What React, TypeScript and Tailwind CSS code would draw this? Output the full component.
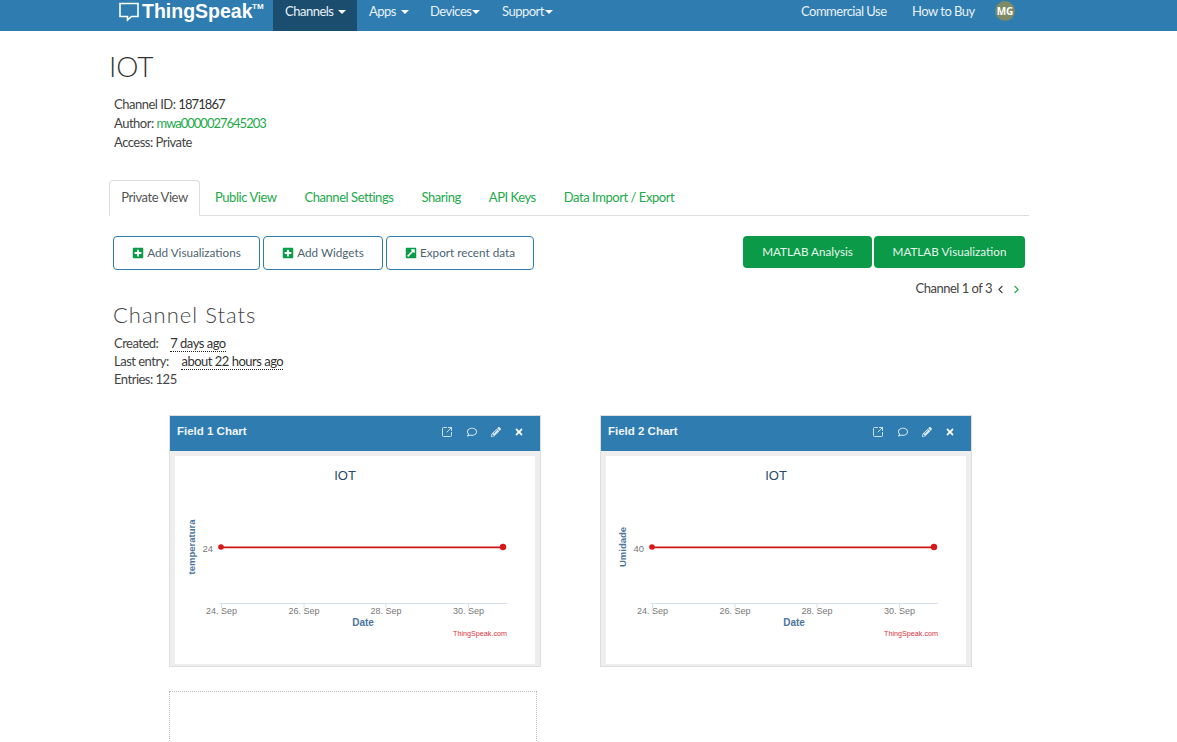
import { ChevronLeft, ChevronRight, SquareArrowOutUpRight } from 'lucide-react'
import { FaRegComment, FaPencilAlt, FaTimes, FaPlusSquare, FaExternalLinkSquareAlt } from 'react-icons/fa'

const body = "font-['Lato','Noto_Sans',sans-serif]"
const raleway = "font-['Lato','Open_Sans',sans-serif]"
const bodyText = 'text-[13px] tracking-[-0.5px]'

function Caret() {
  return <span className="inline-block w-0 h-0 border-x-[4px] border-t-[4px] border-x-transparent border-t-white" />
}

function NavItem({ label, gap, className }: { label: string; gap: string; className: string }) {
  return (
    <a className={`flex items-center h-[31px] pb-[8px] text-[#e8f1f6] ${bodyText} ${className}`}>
      {label}
      <span className={`flex ${gap}`}><Caret /></span>
    </a>
  )
}

function Navbar() {
  return (
    <nav className="h-[31px] bg-[#2e7cb0] flex items-start shrink-0">
      <div className="w-[119px]" />
      <svg width="20" height="21" viewBox="0 0 20 21" className="mt-[1px] shrink-0">
        <path d="M1 2.5h18v13h-6.5l-4 3.5v-3.5H1z" fill="none" stroke="#fff" strokeWidth="1.6" />
      </svg>
      <span className="ml-[3px] w-[110px] text-[19.5px] leading-[22px] font-bold text-white font-['Liberation_Sans',sans-serif]">ThingSpeak</span>
      <span className="w-[21px] text-[8px] leading-[12px] font-bold text-white font-['Liberation_Sans',sans-serif] mt-[1px]">TM</span>
      <NavItem label="Channels" gap="ml-[5px]" className="bg-[#1b4d6e] w-[84px] pl-[12px]" />
      <NavItem label="Apps" gap="ml-[5px]" className="ml-[12px] w-[61px]" />
      <NavItem label="Devices" gap="ml-[1px]" className="w-[72px]" />
      <NavItem label="Support" gap="ml-[1px]" className="w-[60px]" />
      <div className="w-[239px]" />
      <a className={`h-[31px] pt-[2px] text-[#e8f1f6] w-[111px] ${bodyText}`}>Commercial Use</a>
      <a className={`h-[31px] pt-[2px] text-[#e8f1f6] w-[83px] ${bodyText}`}>How to Buy</a>
      <span className="mt-[1px] w-[20px] h-[20px] rounded-full bg-[#7c8a66] text-white text-[10px] font-bold flex items-center justify-center font-['Noto_Sans',sans-serif]">MG</span>
    </nav>
  )
}

function ChannelHeader() {
  return (
    <div>
      <h1 className={`text-[28px] leading-[36px] font-light text-[#333] ${raleway}`}>IOT</h1>
      <div className={`mt-[11px] ml-[5px] leading-[19px] text-[#444] ${bodyText}`}>
        <div>Channel ID: <span className="text-[#333] tracking-[-0.9px]">1871867</span></div>
        <div>Author: <a className="text-[#22a94a] tracking-[-1px]">mwa0000027645203</a></div>
        <div>Access: Private</div>
      </div>
    </div>
  )
}

function Tabs() {
  const tabs = ['Public View', 'Channel Settings', 'Sharing', 'API Keys', 'Data Import / Export']
  return (
    <div className="mt-[28px] h-[36px] border-b border-[#ddd] flex items-start text-[13px] tracking-[-0.45px]">
      <a className="h-[36px] w-[91px] border border-[#ddd] border-b-white rounded-t-[4px] bg-white text-[#555] flex items-center justify-center">Private View</a>
      <div className="flex gap-[28px] ml-[15px] h-[35px] items-center text-[#22a94a]">
        {tabs.map(t => <a key={t}>{t}</a>)}
      </div>
    </div>
  )
}

function OutlineButton({ label, w, icon }: { label: string; w: string; icon: React.ReactNode }) {
  return (
    <button className={`${w} h-[34px] border border-[#2e7cb0] rounded-[4px] bg-white flex items-center justify-center gap-[3px] text-[11.7px] text-[#4d6472] ${raleway}`}>
      <span className="text-[#0a9d48] text-[12px]">{icon}</span>
      {label}
    </button>
  )
}

function ActionRow() {
  return (
    <div className="mt-[20px] flex items-start justify-between px-[4px]">
      <div className="flex gap-[3px]">
        <OutlineButton label="Add Visualizations" w="w-[147px]" icon={<FaPlusSquare />} />
        <OutlineButton label="Add Widgets" w="w-[120px]" icon={<FaPlusSquare />} />
        <OutlineButton label="Export recent data" w="w-[148px]" icon={<FaExternalLinkSquareAlt />} />
      </div>
      <div className="flex gap-[2px]">
        <button className={`w-[129px] h-[32px] bg-[#0a9a48] rounded-[4px] text-[11.7px] text-[#e5f5eb] ${raleway}`}>MATLAB Analysis</button>
        <button className={`w-[151px] h-[32px] bg-[#0a9a48] rounded-[4px] text-[11.7px] text-[#e5f5eb] ${raleway}`}>MATLAB Visualization</button>
      </div>
    </div>
  )
}

function ChannelStats() {
  return (
    <div className="ml-[4px]">
      <h3 className={`mt-[4px] text-[22px] leading-[26px] font-light text-[#444] tracking-[1px] ${raleway}`}>Channel Stats</h3>
      <div className={`mt-[6px] ml-[1px] leading-[18px] text-[#444] ${bodyText}`}>
        <div>Created: <span className="ml-[9px] text-[#333] border-b border-dotted border-[#222]">7 days ago</span></div>
        <div>Last entry: <span className="ml-[10px] text-[#333] border-b border-dotted border-[#222]">about 22 hours ago</span></div>
        <div>Entries: 125</div>
      </div>
    </div>
  )
}

function Plot({ yLabel, yValue }: { yLabel: string; yValue: string }) {
  const font = 'Liberation Sans, sans-serif'
  const ticks = [[46.5, '24. Sep'], [129, '26. Sep'], [211, '28. Sep'], [293.5, '30. Sep']] as const
  return (
    <svg width="360" height="208" viewBox="0 0 360 208" fontFamily={font}>
      <text x="170" y="24" textAnchor="middle" fontSize="13" fill="#274b6d">IOT</text>
      <text transform="translate(20 91) rotate(-90)" textAnchor="middle" fontSize="9.5" fontWeight="bold" fill="#4d759e">{yLabel}</text>
      <text x="38" y="96" textAnchor="end" fontSize="9.5" fill="#777">{yValue}</text>
      <line x1="44" y1="147.5" x2="332" y2="147.5" stroke="#d8e0ee" strokeWidth="1.2" />
      {ticks.map(([x, label]) => (
        <g key={label}>
          <line x1={x} y1="147" x2={x} y2="152" stroke="#d8e0ee" />
          <text x={x} y="158" textAnchor="middle" fontSize="9" fill="#777">{label}</text>
        </g>
      ))}
      <line x1="46" y1="90.6" x2="328" y2="90.6" stroke="#e58585" strokeWidth="1.2" />
      <line x1="46" y1="91.6" x2="328" y2="91.6" stroke="#c81818" strokeWidth="1.2" />
      <circle cx="46" cy="91" r="2.8" fill="#d81818" />
      <circle cx="328" cy="91" r="3.2" fill="#d81818" />
      <text x="188" y="170" textAnchor="middle" fontSize="10" fontWeight="bold" fill="#4d759e">Date</text>
      <text x="332" y="180" textAnchor="end" fontSize="7.2" fill="#d9343a">ThingSpeak.com</text>
    </svg>
  )
}

function ChartCard({ title, yLabel, yValue }: { title: string; yLabel: string; yValue: string }) {
  return (
    <div className="w-[372px] h-[252px] border border-[#ddd] bg-[#eee]">
      <div className="h-[35px] pb-[4px] bg-[#2e7cb0] flex items-center pl-[7px] text-white font-['Liberation_Sans',sans-serif]">
        <span className="text-[11.5px] font-bold text-[#eef5fa]">{title}</span>
        <div className="ml-auto mr-[16px] flex items-center text-[#dfeaf3]">
          <SquareArrowOutUpRight size={12} strokeWidth={1.8} />
          <FaRegComment size={10} className="ml-[14px]" />
          <FaPencilAlt size={10} className="ml-[14px]" />
          <FaTimes size={10} className="ml-[13px] text-white" />
        </div>
      </div>
      <div className="mx-[5px] mt-[5px] h-[208px] bg-white">
        <Plot yLabel={yLabel} yValue={yValue} />
      </div>
    </div>
  )
}

export default function App() {
  return (
    <div className={`w-[1177px] h-[742px] overflow-hidden bg-white flex flex-col ${body}`}>
      <Navbar />
      <main className="w-[920px] ml-[109px] pt-[17px]">
        <ChannelHeader />
        <Tabs />
        <ActionRow />
        <div className={`mt-[10px] mr-[6px] flex items-center justify-end h-[18px] text-[#444] ${bodyText}`}>
          Channel 1 of 3
          <ChevronLeft size={13} className="ml-[2px] text-[#444]" />
          <ChevronRight size={13} className="ml-[3px] text-[#22a94a]" />
        </div>
        <ChannelStats />
        <div className="mt-[27px] ml-[60px] flex gap-[59px]">
          <ChartCard title="Field 1 Chart" yLabel="temperatura" yValue="24" />
          <ChartCard title="Field 2 Chart" yLabel="Umidade" yValue="40" />
        </div>
        <div className="mt-[24px] ml-[60px] w-[368px] h-[120px] border border-dotted border-[#bbb]" />
      </main>
    </div>
  )
}
